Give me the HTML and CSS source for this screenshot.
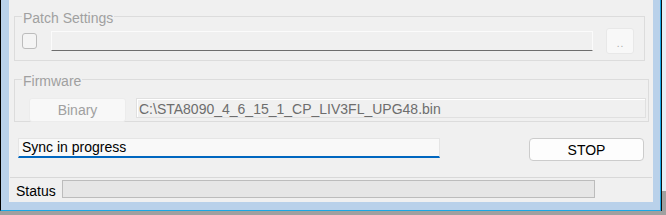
FILE: index.html
```html
<!DOCTYPE html>
<html lang="en">
<head>
    <meta charset="UTF-8">
    <title>Sync</title>
    <link rel="stylesheet" href="styles.css">
</head>
<body>
    <div class="frame">
        <div class="client">
            <!-- Patch group -->
            <fieldset class="group patch">
                <legend>Patch Settings</legend>
                <div class="row">
                    <span class="check"></span>
                    <input type="text" class="field patch-path" disabled>
                    <button class="browse" disabled>..</button>
                </div>
            </fieldset>

            <!-- Firmware group -->
            <fieldset class="group firmware">
                <legend>Firmware</legend>
                <div class="row fw-row">
                    <button class="binary" disabled>Binary</button>
                    <div class="field fw-path">C:\STA8090_4_6_15_1_CP_LIV3FL_UPG48.bin</div>
                </div>
            </fieldset>

            <div class="action-row">
                <div class="sync-box">Sync in progress</div>
                <button class="stop">STOP</button>
            </div>

            <div class="separator"></div>

            <div class="status-row">
                <span class="status-label">Status</span>
                <div class="status-bar"></div>
            </div>
        </div>
    </div>
    <div class="edge"></div>
</body>
</html>
```

FILE: styles.css
```css
body {
    margin: 0;
    background: #a0a0a0;
    font-family: "Liberation Sans", Arial, sans-serif;
    font-size: 14px;
    display: flex;
    align-items: flex-start;
}
.frame {
    border-left: 1px solid #000;
    border-right: 1px solid #18a8e6;
    border-bottom: 1px solid #18a8e6;
    padding: 0 7px 8px 8px;
    background: #b9d1ea;
    box-shadow: 1px 0 0 #111;
}
.edge {
    width: 4px;
    height: 191px;
    margin-left: 1px;
    background: #e6edf5;
}
.client {
    width: 644px;
    height: 202px;
    box-sizing: border-box;
    background: #f0f0f0;
    padding-top: 8px;
}
.group {
    margin: 0 0 0 5px;
    border: 1px solid #dcdcdc;
    padding: 6px 0 9px 7px;
    box-sizing: border-box;
}
.group legend {
    padding: 3px 1px 0 1px;
    line-height: 14px;
    color: #a0a0a0;
}
.patch {
    width: 631px;
}
.firmware {
    width: 635px;
    margin-top: 10px;
    padding: 10px 0 0 7px;
}
.row {
    display: flex;
    align-items: center;
    height: 20px;
}
.check {
    width: 13px;
    height: 14px;
    border: 1px solid #bcbcbc;
    border-radius: 3px;
    background: #f4f4f4;
    margin-right: 14px;
}
.field {
    box-sizing: border-box;
    height: 20px;
    background: #f0f0f0;
    font: inherit;
}
.patch-path {
    width: 542px;
    border: 1px solid #fbfbfb;
    border-bottom-color: #6e6e6e;
    margin: 0 13px 0 0;
    padding: 0;
}
.browse {
    width: 28px;
    height: 26px;
    border: 1px solid #e8e8e8;
    border-radius: 3px;
    background: #f8f8f8;
    color: #a8a8a8;
    font-size: 10px;
    letter-spacing: 1px;
    padding: 4px 0 0 1px;
}
.fw-row {
    align-items: flex-start;
    height: 23px;
    padding-left: 7px;
}
.binary {
    width: 97px;
    height: 24px;
    border: 1px solid #ececec;
    border-radius: 3px;
    background: #f8f8f8;
    color: #a0a0a0;
    font: inherit;
    padding: 0;
    margin-right: 10px;
}
.fw-path {
    width: 510px;
    border: 1px solid #e0e0e0;
    box-shadow: inset 1px 1px 0 #fff;
    color: #6d6d6d;
    padding: 1px 0 0 2px;
    line-height: 18px;
    white-space: nowrap;
}
.action-row {
    display: flex;
    justify-content: space-between;
    align-items: flex-start;
    margin-top: 16px;
    padding: 0 9px;
}
.sync-box {
    width: 422px;
    height: 20px;
    box-sizing: border-box;
    background: #f9f9f9;
    border: 1px solid #e5e5e5;
    border-bottom: 2px solid #0067c0;
    color: #000;
    padding-left: 3px;
    line-height: 17px;
}
.stop {
    width: 115px;
    height: 23px;
    border: 1px solid #cccccc;
    border-radius: 4px;
    background: #fdfdfd;
    color: #000;
    font: inherit;
    padding: 1px 0 0 0;
}
.separator {
    height: 1px;
    background: #d8d8d8;
    margin: 16px 1px 0 1px;
}
.status-row {
    display: flex;
    align-items: flex-start;
    margin-top: 2px;
    padding-left: 7px;
}
.status-label {
    width: 46px;
    line-height: 16px;
    margin-top: 3px;
    color: #000;
}
.status-bar {
    width: 533px;
    height: 18px;
    box-sizing: border-box;
    background: #e6e6e6;
    border: 1px solid #bcbcbc;
}
```
